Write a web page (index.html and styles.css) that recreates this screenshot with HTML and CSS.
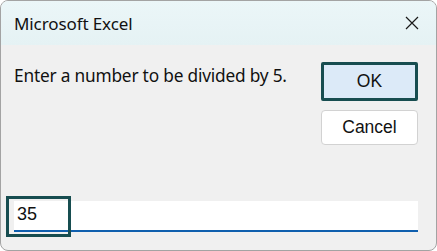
FILE: index.html
```html
<!DOCTYPE html>
<html lang="en">
<head>
    <meta charset="UTF-8">
    <meta name="viewport" content="width=device-width, initial-scale=1.0">
    <title>Microsoft Excel</title>
    <link rel="stylesheet" href="styles.css">
</head>
<body>
    <div class="window">
        <header class="titlebar">
            <span class="title">Microsoft Excel</span>
            <button class="close-btn" aria-label="Close">
                <svg width="14" height="14" viewBox="0 0 14 14">
                    <path d="M1 1 L13 13 M13 1 L1 13" stroke="#1a1a1a" stroke-width="1.2" fill="none"/>
                </svg>
            </button>
        </header>

        <main class="dialog-body">
            <div class="prompt-row">
                <p class="message">Enter a number to be divided by 5.</p>
                <div class="actions">
                    <button class="btn btn-default">OK</button>
                    <button class="btn">Cancel</button>
                </div>
            </div>
            <div class="input-wrap">
                <input type="text" class="answer-input" value="35">
                <span class="focus-ring"></span>
            </div>
        </main>
    </div>
</body>
</html>
```

FILE: styles.css
```css
:root {
    --frame: #a3a3a3;
    --title-bg: #e8f4f6;
    --body-bg: #f0f0f0;
    --focus: #174d50;
    --accent: #0f5fae;
    --text: #111111;
}
* {
    margin: 0;
    padding: 0;
    box-sizing: border-box;
}
body {
    font-family: "Noto Sans", "Open Sans", Arial, sans-serif;
    color: var(--text);
    background-color: #ffffff;
}
.window {
    width: 437px;
    height: 251px;
    border: 1px solid var(--frame);
    border-radius: 8px;
    overflow: hidden;
    display: flex;
    flex-direction: column;
    background-color: var(--body-bg);
}

/* Title bar */
.titlebar {
    height: 44px;
    flex: none;
    display: flex;
    align-items: center;
    justify-content: space-between;
    padding: 0 17px 0 13px;
    background: linear-gradient(to bottom, #ebf6f8, #e5f2f4);
}
.title {
    font-size: 17px;
    letter-spacing: -0.1px;
}
.close-btn {
    background: none;
    border: none;
    display: flex;
    width: 14px;
    height: 14px;
}

/* Dialog body */
.dialog-body {
    flex: 1;
    display: flex;
    flex-direction: column;
    padding: 17px 18px 18px 13px;
}
.prompt-row {
    display: flex;
    justify-content: space-between;
    align-items: flex-start;
}
.message {
    font-size: 17.3px;
    letter-spacing: -0.2px;
    line-height: 22px;
    padding-top: 3px;
}
.actions {
    width: 97px;
    display: flex;
    flex-direction: column;
    gap: 9px;
}
.btn {
    height: 35px;
    font-family: "Liberation Sans", Arial, sans-serif;
    font-size: 17.5px;
    color: var(--text);
    background-color: #ffffff;
    border: 1px solid #d2d2d2;
    border-radius: 4px;
}
.btn-default {
    height: 39px;
    background-color: #dceaf8;
    border: 3px solid var(--focus);
    border-radius: 2px;
}

/* Input */
.input-wrap {
    margin-top: auto;
    position: relative;
}
.answer-input {
    display: block;
    width: 100%;
    height: 31px;
    padding: 0 3px 2px;
    font-family: "Liberation Sans", Arial, sans-serif;
    font-size: 18px;
    color: var(--text);
    background-color: #ffffff;
    border: none;
    border-bottom: 2px solid var(--accent);
    outline: none;
}
.focus-ring {
    position: absolute;
    left: -8px;
    top: -5px;
    width: 65px;
    height: 41px;
    border: 3px solid var(--focus);
}
```
